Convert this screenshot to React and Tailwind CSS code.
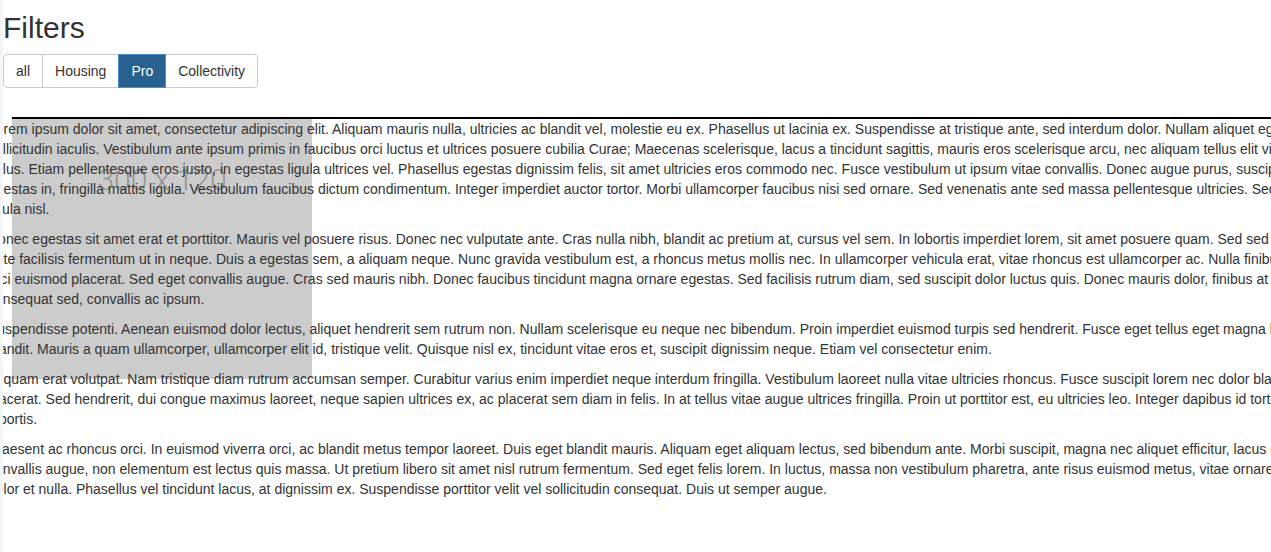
import React, { useState } from "react";

const FILTERS = ["all", "Housing", "Pro", "Collectivity"];

// each paragraph is written line by line so the wraps match the wide layout
const PARAGRAPHS = [
  [
    "Lorem ipsum dolor sit amet, consectetur adipiscing elit. Aliquam mauris nulla, ultricies ac blandit vel, molestie eu ex. Phasellus ut lacinia ex. Suspendisse at tristique ante, sed interdum dolor. Nullam aliquet eget mi at sollicitudin.",
    "sollicitudin iaculis. Vestibulum ante ipsum primis in faucibus orci luctus et ultrices posuere cubilia Curae; Maecenas scelerisque, lacus a tincidunt sagittis, mauris eros scelerisque arcu, nec aliquam tellus elit vitae tellus.",
    "tellus. Etiam pellentesque eros justo, in egestas ligula ultrices vel. Phasellus egestas dignissim felis, sit amet ultricies eros commodo nec. Fusce vestibulum ut ipsum vitae convallis. Donec augue purus, suscipit vel egestas.",
    "egestas in, fringilla mattis ligula. Vestibulum faucibus dictum condimentum. Integer imperdiet auctor tortor. Morbi ullamcorper faucibus nisi sed ornare. Sed venenatis ante sed massa pellentesque ultricies. Sed non ligula.",
    "ligula nisl.",
  ],
  [
    "Donec egestas sit amet erat et porttitor. Mauris vel posuere risus. Donec nec vulputate ante. Cras nulla nibh, blandit ac pretium at, cursus vel sem. In lobortis imperdiet lorem, sit amet posuere quam. Sed sed ante.",
    "ante facilisis fermentum ut in neque. Duis a egestas sem, a aliquam neque. Nunc gravida vestibulum est, a rhoncus metus mollis nec. In ullamcorper vehicula erat, vitae rhoncus est ullamcorper ac. Nulla finibus orci.",
    "orci euismod placerat. Sed eget convallis augue. Cras sed mauris nibh. Donec faucibus tincidunt magna ornare egestas. Sed facilisis rutrum diam, sed suscipit dolor luctus quis. Donec mauris dolor, finibus at consequat.",
    "consequat sed, convallis ac ipsum.",
  ],
  [
    "Suspendisse potenti. Aenean euismod dolor lectus, aliquet hendrerit sem rutrum non. Nullam scelerisque eu neque nec bibendum. Proin imperdiet euismod turpis sed hendrerit. Fusce eget tellus eget magna blandit.",
    "blandit. Mauris a quam ullamcorper, ullamcorper elit id, tristique velit. Quisque nisl ex, tincidunt vitae eros et, suscipit dignissim neque. Etiam vel consectetur enim.",
  ],
  [
    "Aliquam erat volutpat. Nam tristique diam rutrum accumsan semper. Curabitur varius enim imperdiet neque interdum fringilla. Vestibulum laoreet nulla vitae ultricies rhoncus. Fusce suscipit lorem nec dolor blandit placerat.",
    "placerat. Sed hendrerit, dui congue maximus laoreet, neque sapien ultrices ex, ac placerat sem diam in felis. In at tellus vitae augue ultrices fringilla. Proin ut porttitor est, eu ultricies leo. Integer dapibus id tortor lobortis.",
    "lobortis.",
  ],
  [
    "Praesent ac rhoncus orci. In euismod viverra orci, ac blandit metus tempor laoreet. Duis eget blandit mauris. Aliquam eget aliquam lectus, sed bibendum ante. Morbi suscipit, magna nec aliquet efficitur, lacus convallis.",
    "convallis augue, non elementum est lectus quis massa. Ut pretium libero sit amet nisl rutrum fermentum. Sed eget felis lorem. In luctus, massa non vestibulum pharetra, ante risus euismod metus, vitae ornare dolor.",
    "dolor et nulla. Phasellus vel tincidunt lacus, at dignissim ex. Suspendisse porttitor velit vel sollicitudin consequat. Duis ut semper augue.",
  ],
];

function FilterGroup({ active, onChange }) {
  return (
    <div className="inline-flex">
      {FILTERS.map((f, i) => {
        const isActive = f === active;
        return (
          <button
            key={f}
            onClick={() => onChange(f)}
            className={
              "h-[34px] px-[12px] text-[14px] leading-5 border " +
              (i === 0 ? "rounded-l-[4px] " : "-ml-px ") +
              (i === FILTERS.length - 1 ? "rounded-r-[4px] " : "") +
              (isActive
                ? "relative z-10 bg-[#286090] border-[#4d8cd0] text-white"
                : "bg-white border-[#cccccc] text-[#333333]")
            }
          >
            {f}
          </button>
        );
      })}
    </div>
  );
}

export default function App() {
  const [filter, setFilter] = useState("Pro");

  return (
    <div
      className="flex min-h-screen h-screen bg-white text-[#333333]"
      style={{ fontFamily: '"Liberation Sans", Arial, sans-serif' }}
    >
      <div className="w-[3px] shrink-0 bg-[#f4f5f7]"></div>
      <div className="flex-1 min-w-0 overflow-hidden">
        <h1 className="mt-[11px] mb-[10px] text-[30px] leading-[33px] font-normal">Filters</h1>
        <FilterGroup active={filter} onChange={setFilter} />

        <div className="relative mt-[29px] ml-[9px] border-t-2 border-black">
          <div className="absolute left-0 top-0 w-[300px] h-[260px] bg-[#cccccc]">
            <div
              className="h-[120px] flex items-center justify-center text-[30px] font-light text-[#969696]"
              style={{ fontFamily: "Roboto, sans-serif" }}
            >
              300 x 120
            </div>
          </div>

          <div className="relative -ml-[24px] text-[14px] leading-5">
            {PARAGRAPHS.map((lines, i) => (
              <p key={i} className="mb-[10px]">
                {lines.map((line, j) => (
                  <span key={j} className="block whitespace-nowrap">
                    {line}
                  </span>
                ))}
              </p>
            ))}
          </div>
        </div>
      </div>
    </div>
  );
}
